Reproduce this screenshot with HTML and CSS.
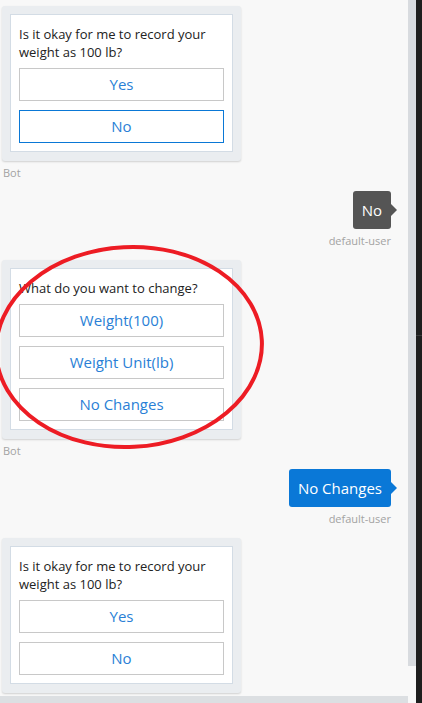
FILE: index.html
```html
<!DOCTYPE html>
<html lang="en">
<head>
<meta charset="utf-8">
<title>Chat</title>
<link rel="stylesheet" href="styles.css">
</head>
<body>
<div class="screen">
  <div class="viewport">
    <div class="chat">
      <div class="msg bot">
        <div class="card">
          <div class="card-body">
            <p class="prompt">Is it okay for me to record your<br>weight as 100 lb?</p>
            <button class="choice">Yes</button>
            <button class="choice focused">No</button>
          </div>
        </div>
        <div class="meta">Bot</div>
      </div>

      <div class="msg user">
        <div class="bubble dark">No</div>
        <div class="meta">default-user</div>
      </div>

      <div class="msg bot">
        <div class="card">
          <div class="card-body">
            <p class="prompt">What do you want to change?</p>
            <button class="choice">Weight(100)</button>
            <button class="choice">Weight Unit(lb)</button>
            <button class="choice">No Changes</button>
          </div>
        </div>
        <div class="meta">Bot</div>
      </div>

      <div class="msg user">
        <div class="bubble blue">No Changes</div>
        <div class="meta">default-user</div>
      </div>

      <div class="msg bot">
        <div class="card">
          <div class="card-body">
            <p class="prompt">Is it okay for me to record your<br>weight as 100 lb?</p>
            <button class="choice">Yes</button>
            <button class="choice">No</button>
          </div>
        </div>
      </div>

      <svg class="annotation" width="408" height="696" viewBox="0 0 408 696" aria-hidden="true">
        <ellipse cx="129" cy="347" rx="133" ry="100" fill="none" stroke="#ed1c24" stroke-width="4" transform="rotate(-3 129 347)"/>
      </svg>
    </div>
    <div class="hscroll"></div>
  </div>
  <div class="vscroll"><div class="vthumb"></div></div>
  <div class="edge"><div class="edge-line"></div></div>
</div>
</body>
</html>
```

FILE: styles.css
```css
html, body {
  margin: 0;
  padding: 0;
  background: #f8f8f8;
}

body {
  font-family: "Open Sans", "Noto Sans", sans-serif;
  width: 422px;
  height: 703px;
  overflow: hidden;
}

.screen {
  display: flex;
  width: 422px;
  height: 703px;
}

.viewport {
  width: 408px;
  display: flex;
  flex-direction: column;
}

.chat {
  position: relative;
  height: 696px;
  overflow: hidden;
  padding: 6px 0 0 2px;
  box-sizing: border-box;
  display: flex;
  flex-direction: column;
}

.msg {
  display: flex;
  flex-direction: column;
}

.msg.bot + .msg.user {
  margin-top: 10px;
}

.msg.user + .msg.bot {
  margin-top: 11px;
}

.msg.user {
  align-items: flex-end;
  padding-right: 17px;
}

.card {
  width: 239px;
  box-sizing: border-box;
  padding: 8px 8px 9px;
  background: #eaedf0;
  border-radius: 3px;
  box-shadow: 0 1px 2px rgba(0, 0, 0, 0.16);
}

.card-body {
  background: #ffffff;
  border: 1px solid #d3dce5;
  padding: 10px 8px 8px;
  display: flex;
  flex-direction: column;
  gap: 9px;
}

.prompt {
  margin: 0 0 -2px;
  font-size: 13px;
  line-height: 18px;
  color: #222222;
}

.choice {
  display: block;
  width: 100%;
  height: 33px;
  margin: 0;
  padding: 0;
  background: #ffffff;
  border: 1px solid #c8c8c8;
  color: #2a7fd6;
  font-family: "Open Sans", "Noto Sans", sans-serif;
  font-size: 15px;
  line-height: 31px;
  text-align: center;
}

.choice.focused {
  border-color: #0a78d6;
}

.meta {
  margin-top: 4px;
  font-size: 11px;
  line-height: 16px;
  color: #a3a3a3;
  padding-left: 1px;
}

.bubble {
  position: relative;
  padding: 10px 9px;
  font-size: 15px;
  line-height: 18px;
  color: #ffffff;
  border-radius: 3px;
}

.bubble::after {
  content: "";
  position: absolute;
  right: -6px;
  top: 50%;
  margin-top: -6px;
  border-top: 6px solid transparent;
  border-bottom: 6px solid transparent;
  border-left: 6px solid currentColor;
}

.bubble.dark {
  background: #555555;
}

.bubble.dark::after {
  border-left-color: #555555;
}

.bubble.blue {
  background: #0a78d7;
}

.bubble.blue::after {
  border-left-color: #0a78d7;
}

.annotation {
  position: absolute;
  left: 0;
  top: 0;
  pointer-events: none;
}

.hscroll {
  height: 7px;
  background: #dcdfe2;
}

.vscroll {
  width: 8px;
  background: #f8f8f8;
}

.vthumb {
  height: 666px;
  background: #d8dbdf;
}

.edge {
  width: 6px;
  background: #1e1e1e;
}

.edge-line {
  margin-top: 335px;
  height: 1px;
  background: #3a3a3a;
}
```
